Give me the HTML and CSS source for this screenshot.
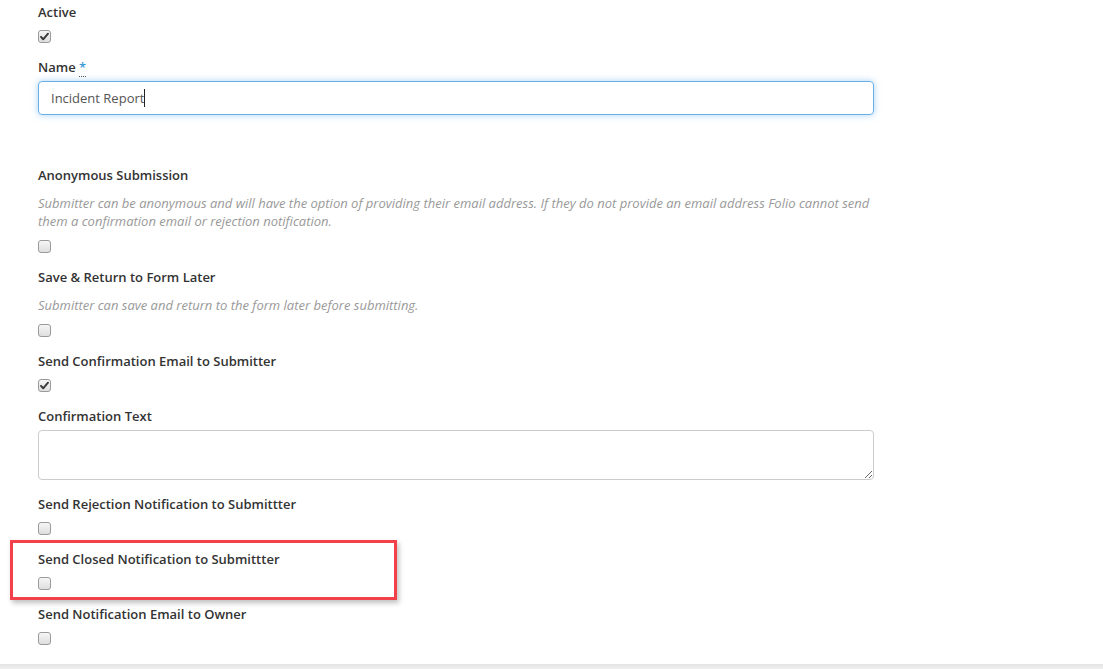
FILE: index.html
```html
<!DOCTYPE html>
<html>
<head>
<meta charset="utf-8">
<link rel="stylesheet" href="styles.css">
</head>
<body>
<div class="page">
  <form class="form">
    <div class="group">
      <label class="lbl">Active</label>
      <span class="cb checked"><svg viewBox="0 0 13 13" width="13" height="13"><path d="M3 6.9 L5.2 9.3 L10 3.7" fill="none" stroke="#3a3a3a" stroke-width="2" stroke-linecap="round" stroke-linejoin="round"/></svg></span>
    </div>
    <div class="group">
      <label class="lbl">Name <abbr class="req" title="required">*</abbr></label>
      <div class="input focus">Incident Report<span class="caret"></span></div>
    </div>
    <div class="spacer"></div>
    <div class="group">
      <label class="lbl">Anonymous Submission</label>
      <p class="help">Submitter can be anonymous and will have the option of providing their email address. If they do not provide an email address Folio cannot send them a confirmation email or rejection notification.</p>
      <span class="cb"></span>
    </div>
    <div class="group">
      <label class="lbl">Save &amp; Return to Form Later</label>
      <p class="help">Submitter can save and return to the form later before submitting.</p>
      <span class="cb"></span>
    </div>
    <div class="group">
      <label class="lbl">Send Confirmation Email to Submitter</label>
      <span class="cb checked"><svg viewBox="0 0 13 13" width="13" height="13"><path d="M3 6.9 L5.2 9.3 L10 3.7" fill="none" stroke="#3a3a3a" stroke-width="2" stroke-linecap="round" stroke-linejoin="round"/></svg></span>
    </div>
    <div class="group">
      <label class="lbl">Confirmation Text</label>
      <textarea class="textarea"></textarea>
    </div>
    <div class="group">
      <label class="lbl">Send Rejection Notification to Submittter</label>
      <span class="cb"></span>
    </div>
    <div class="group">
      <label class="lbl">Send Closed Notification to Submittter</label>
      <span class="cb"></span>
    </div>
    <div class="group">
      <label class="lbl">Send Notification Email to Owner</label>
      <span class="cb"></span>
    </div>
  </form>
  <div class="highlight"></div>
</div>
<div class="bottombar"></div>
</body>
</html>
```
FILE: styles.css
```css
html, body {
  margin: 0;
  padding: 0;
  background: #fff;
}
body {
  font-family: "Open Sans", "Liberation Sans", sans-serif;
  font-size: 13px;
  color: #333;
  height: 669px;
  overflow: hidden;
  position: relative;
}
.page {
  position: relative;
  padding: 3px 0 0 38px;
}
.form {
  width: 836px;
}
.group {
  margin-bottom: 15px;
}
.lbl {
  display: block;
  font-weight: 600;
  line-height: 18px;
  margin: 0;
  color: #333;
}
.req {
  color: #3d9ad6;
  text-decoration: none;
  border-bottom: 1px dotted #555;
  font-weight: 600;
  cursor: help;
}
.help {
  margin: 10px 0 0;
  font-style: italic;
  color: #999;
  line-height: 18px;
}
.cb {
  display: block;
  box-sizing: border-box;
  width: 13px;
  height: 13px;
  margin-top: 10px;
  border: 1px solid #9a9a9a;
  border-radius: 3px;
  background: linear-gradient(#f6f6f6, #dedede);
  position: relative;
}
.lbl + .cb {
  margin-top: 9px;
}
.cb svg {
  position: absolute;
  left: -1px;
  top: -1px;
}
.input {
  box-sizing: border-box;
  height: 34px;
  margin-top: 5px;
  padding: 0 12px;
  line-height: 32px;
  border: 1px solid #ccc;
  border-radius: 4px;
  color: #555;
  font-size: 13px;
}
.input.focus {
  border-color: #66afe9;
  box-shadow: 0 0 7px rgba(102, 175, 233, 0.55);
}
.caret {
  display: inline-block;
  width: 1px;
  height: 18px;
  background: #222;
  vertical-align: -4px;
}
.textarea {
  display: block;
  box-sizing: border-box;
  width: 100%;
  height: 50px;
  margin: 5px 0 0;
  border: 1px solid #ccc;
  border-radius: 4px;
  font-family: inherit;
  font-size: 13px;
  padding: 6px 12px;
}
.spacer {
  height: 36px;
}
.highlight {
  position: absolute;
  left: 10px;
  top: 540px;
  width: 387px;
  height: 60px;
  box-sizing: border-box;
  border: 3px solid #f2414a;
  box-shadow: 2px 3px 5px rgba(0, 0, 0, 0.25);
}
.bottombar {
  position: absolute;
  left: 0;
  right: 0;
  bottom: 0;
  height: 5px;
  background: linear-gradient(#e4e4e4, #efefef);
}
```
